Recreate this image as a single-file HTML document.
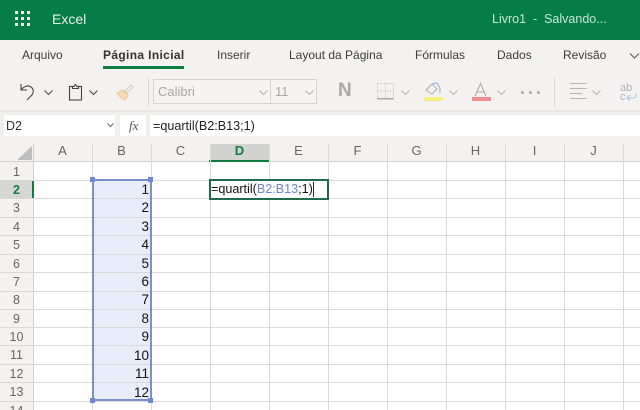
<!DOCTYPE html>
<html><head><meta charset="utf-8"><style>
html,body{margin:0;padding:0;width:640px;height:410px;overflow:hidden;background:#fff}
body{position:relative;font-family:"Liberation Sans",sans-serif;color:#333}
.a{position:absolute}
.t{position:absolute;white-space:nowrap;line-height:16px}
.tab{font-size:12px;color:#3c3c3c;top:47px}
.ch{position:absolute;top:143px;width:59px;text-align:center;font-size:13px;line-height:16px;color:#666}
.rh{position:absolute;left:0;width:33px;text-align:center;font-size:12.5px;line-height:18px;color:#666}
.v{position:absolute;left:92px;width:57px;text-align:right;font-size:13.5px;line-height:18px;color:#111}
.gv{position:absolute;top:144px;width:1px;height:266px;background:#d9d9d9}
.gh{position:absolute;left:33px;width:607px;height:1px;background:#d9d9d9}
.hh{position:absolute;left:0;width:33px;height:1px;background:#d9d9d9}
svg{position:absolute;overflow:visible}
</style></head><body>
<div class="a" style="left:0;top:0;width:640px;height:40px;background:#067d46"></div>
<svg style="left:15px;top:11px" width="15" height="15" fill="#e8f3ec"><rect x="0" y="0" width="3" height="3"/><rect x="6" y="0" width="3" height="3"/><rect x="12" y="0" width="3" height="3"/><rect x="0" y="6" width="3" height="3"/><rect x="6" y="6" width="3" height="3"/><rect x="12" y="6" width="3" height="3"/><rect x="0" y="12" width="3" height="3"/><rect x="6" y="12" width="3" height="3"/><rect x="12" y="12" width="3" height="3"/></svg>
<div class="t" style="left:52px;top:11px;font-size:14px;color:#e3f4ea;">Excel</div>
<div class="t" style="left:492px;top:11px;font-size:12.5px;color:#c5e8d3;">Livro1 &nbsp;- &nbsp;Salvando...</div>

<div class="a" style="left:0;top:40px;width:640px;height:72px;background:#f3f2f1"></div>
<div class="a" style="left:0;top:110px;width:640px;height:2px;background:#e6e5e4"></div>
<div class="t tab" style="left:22px">Arquivo</div>
<div class="t tab" style="left:103px;font-weight:bold;color:#333;letter-spacing:.35px">Página Inicial</div>
<div class="a" style="left:103px;top:66px;width:81px;height:3px;background:#107c41"></div>
<div class="t tab" style="left:217px">Inserir</div>
<div class="t tab" style="left:289px">Layout da Página</div>
<div class="t tab" style="left:415px">Fórmulas</div>
<div class="t tab" style="left:497px">Dados</div>
<div class="t tab" style="left:563px">Revisão</div>
<svg style="left:630px;top:53px" width="10" height="6" fill="none" stroke="#555"><path d="M0 .5l4.5 4.5 4.5-4.5"/></svg>

<svg style="left:20px;top:83px" width="18" height="18" fill="none" stroke="#444" stroke-width="1.1"><path d="M1 1v6h6"/><path d="M1 7c3-4 7-5 10-3 3 2 3 6 0 9l-4 4"/></svg>
<svg style="left:44px;top:90px" width="10" height="6" fill="none" stroke="#444"><path d="M.5.5l4 4 4-4"/></svg>
<svg style="left:69px;top:84px" width="14" height="17" fill="none" stroke="#444" stroke-width="1.1"><rect x=".5" y="2.5" width="12" height="13.5"/><path d="M3.5 4.5h6V2.5H8L6.5.5 5 2.5H3.5z" fill="#f3f2f1"/></svg>
<svg style="left:89px;top:90px" width="10" height="6" fill="none" stroke="#444"><path d="M.5.5l4 4 4-4"/></svg>
<svg style="left:116px;top:84px" width="18" height="16" fill="none" stroke-width="1.1"><path d="M1 9l6-3 5 5-3 5C6 15 3 12 1 9z" fill="#f8dcb8" stroke="#f0c590"/><path d="M9 7l6-6 2 2-6 6z" stroke="#ccc"/></svg>
<div class="a" style="left:148px;top:78px;width:1px;height:28px;background:#d8d7d6"></div>
<div class="a" style="left:153px;top:79px;width:164px;height:25px;border:1px solid #d4d3d2;box-sizing:border-box;background:#f5f4f3"></div>
<div class="a" style="left:270px;top:79px;width:1px;height:25px;background:#d4d3d2"></div>
<div class="t" style="left:158px;top:84px;font-size:13px;color:#a6a6a6">Calibri</div>
<div class="t" style="left:275px;top:84px;font-size:13px;color:#a6a6a6">11</div>
<svg style="left:259px;top:90px" width="10" height="6" fill="none" stroke="#b0b0b0"><path d="M.5.5l4 4 4-4"/></svg>
<svg style="left:305px;top:90px" width="10" height="6" fill="none" stroke="#b0b0b0"><path d="M.5.5l4 4 4-4"/></svg>
<div class="t" style="left:338px;top:83px;font-size:19px;font-weight:bold;color:#a9a9a9">N</div>
<svg style="left:377px;top:83px" width="17" height="17" fill="none" stroke="#cfcfcf"><path d="M.5.5h16v15H.5zM8.5.5v15M.5 8h16" stroke-dasharray="2 1"/><path d="M0 15.8h17" stroke="#aaa" stroke-width="1.5"/></svg>
<svg style="left:401px;top:90px" width="10" height="6" fill="none" stroke="#b0b0b0"><path d="M.5.5l4 4 4-4"/></svg>
<svg style="left:425px;top:83px" width="18" height="14" fill="none" stroke="#b0b0b0"><path d="M1 7l6-6 5 5-5 5z"/><path d="M7 1l5-1 3 5v5" stroke="#8fa9d0"/></svg>
<div class="a" style="left:424px;top:97px;width:19px;height:4px;background:#f6f07e"></div>
<svg style="left:449px;top:90px" width="10" height="6" fill="none" stroke="#b0b0b0"><path d="M.5.5l4 4 4-4"/></svg>
<svg style="left:474px;top:83px" width="14" height="14" fill="none" stroke="#a9a9a9"><path d="M1 13L6.5 .5 12 13M3 9h7"/></svg>
<div class="a" style="left:472px;top:97px;width:19px;height:4px;background:#ee8d90"></div>
<svg style="left:497px;top:90px" width="10" height="6" fill="none" stroke="#b0b0b0"><path d="M.5.5l4 4 4-4"/></svg>
<div class="a" style="left:521px;top:91px;width:3px;height:3px;background:#a9a9a9;box-shadow:8px 0 #a9a9a9,16px 0 #a9a9a9;border-radius:2px"></div>
<div class="a" style="left:554px;top:78px;width:1px;height:28px;background:#d8d7d6"></div>
<svg style="left:570px;top:83px" width="17" height="17" stroke="#b5b5b5"><path d="M0 .5h17M0 5.5h17M0 10.5h12M0 15.5h17" fill="none"/></svg>
<svg style="left:592px;top:90px" width="10" height="6" fill="none" stroke="#b0b0b0"><path d="M.5.5l4 4 4-4"/></svg>
<div class="t" style="left:620px;top:84px;font-size:11px;line-height:9px;color:#b0b0c0">ab<br>c</div>
<svg style="left:626px;top:93px" width="12" height="8" fill="none" stroke="#a8c4e6"><path d="M10 0v3q0 2-3 2H1M4 2L1 5l3 3"/></svg>

<div class="a" style="left:0;top:112px;width:640px;height:32px;background:#f0efee"></div>
<div class="a" style="left:4px;top:115px;width:111px;height:21px;background:#fff"></div>
<div class="t" style="left:6px;top:118px;font-size:12.5px;color:#333">D2</div>
<svg style="left:107px;top:123px" width="8" height="5" fill="none" stroke="#666"><path d="M.5.5l3 3 3-3"/></svg>
<div class="a" style="left:120px;top:115px;width:26px;height:21px;background:#fff"></div>
<div class="t" style="left:129px;top:118px;font:italic 13px 'Liberation Serif',serif;line-height:16px;color:#555">fx</div>
<div class="a" style="left:150px;top:115px;width:490px;height:21px;background:#fff"></div>
<div class="t" style="left:153px;top:118px;font-size:12.6px;color:#222">=quartil(B2:B13;1)</div>

<div class="a" style="left:0;top:137px;width:640px;height:25px;background:#f3f2f1"></div>
<div class="a" style="left:0;top:162px;width:33px;height:248px;background:#f3f2f1"></div>
<div class="a" style="left:0;top:161px;width:640px;height:1px;background:#cfcfcf"></div>
<div class="a" style="left:33px;top:144px;width:1px;height:266px;background:#cfcfcf"></div>
<svg style="left:17px;top:146px" width="15" height="14" fill="#bdbdbd"><path d="M15 0v14H0z"/></svg>
<div class="a" style="left:210px;top:144px;width:60px;height:17px;background:#d3d3d2"></div>
<div class="a" style="left:209px;top:160px;width:61px;height:2px;background:#107c41"></div>
<div class="a" style="left:0;top:180px;width:33px;height:18px;background:#d6d6d5"></div>
<div class="a" style="left:32px;top:180px;width:2px;height:19px;background:#107c41"></div>

<div class="ch" style="left:33px">A</div>
<div class="ch" style="left:92px">B</div>
<div class="ch" style="left:151px">C</div>
<div class="ch" style="left:210px;color:#107c41;font-weight:bold">D</div>
<div class="ch" style="left:269px">E</div>
<div class="ch" style="left:328px">F</div>
<div class="ch" style="left:387px">G</div>
<div class="ch" style="left:446px">H</div>
<div class="ch" style="left:505px">I</div>
<div class="ch" style="left:564px">J</div>

<div class="gv" style="left:92px"></div><div class="gv" style="left:151px"></div><div class="gv" style="left:210px"></div><div class="gv" style="left:269px"></div><div class="gv" style="left:328px"></div><div class="gv" style="left:387px"></div><div class="gv" style="left:446px"></div><div class="gv" style="left:505px"></div><div class="gv" style="left:564px"></div><div class="gv" style="left:623px"></div>

<div class="a" style="left:92px;top:180px;width:59px;height:221px;background:#e9edfa"></div>

<div class="gh" style="top:180px"></div><div class="gh" style="top:198px"></div><div class="gh" style="top:217px"></div><div class="gh" style="top:235px"></div><div class="gh" style="top:254px"></div><div class="gh" style="top:272px"></div><div class="gh" style="top:291px"></div><div class="gh" style="top:309px"></div><div class="gh" style="top:327px"></div><div class="gh" style="top:345px"></div><div class="gh" style="top:364px"></div><div class="gh" style="top:382px"></div><div class="gh" style="top:401px"></div>
<div class="hh" style="top:180px"></div><div class="hh" style="top:198px"></div><div class="hh" style="top:217px"></div><div class="hh" style="top:235px"></div><div class="hh" style="top:254px"></div><div class="hh" style="top:272px"></div><div class="hh" style="top:291px"></div><div class="hh" style="top:309px"></div><div class="hh" style="top:327px"></div><div class="hh" style="top:345px"></div><div class="hh" style="top:364px"></div><div class="hh" style="top:382px"></div><div class="hh" style="top:401px"></div>

<div class="rh" style="top:163px">1</div>
<div class="rh" style="top:181px;color:#107c41;font-weight:bold">2</div>
<div class="rh" style="top:199px">3</div>
<div class="rh" style="top:218px">4</div>
<div class="rh" style="top:236px">5</div>
<div class="rh" style="top:255px">6</div>
<div class="rh" style="top:273px">7</div>
<div class="rh" style="top:291px">8</div>
<div class="rh" style="top:310px">9</div>
<div class="rh" style="top:328px">10</div>
<div class="rh" style="top:346px">11</div>
<div class="rh" style="top:365px">12</div>
<div class="rh" style="top:383px">13</div>
<div class="rh" style="top:402px">14</div>

<div class="v" style="top:181px">1</div>
<div class="v" style="top:199px">2</div>
<div class="v" style="top:218px">3</div>
<div class="v" style="top:236px">4</div>
<div class="v" style="top:255px">5</div>
<div class="v" style="top:273px">6</div>
<div class="v" style="top:291px">7</div>
<div class="v" style="top:310px">8</div>
<div class="v" style="top:328px">9</div>
<div class="v" style="top:347px">10</div>
<div class="v" style="top:365px">11</div>
<div class="v" style="top:384px">12</div>

<div class="a" style="left:92px;top:179px;width:60px;height:222px;box-sizing:border-box;border:2px solid #7a90c8"></div>
<div class="a" style="left:90px;top:177px;width:5px;height:5px;background:#7088d2"></div>
<div class="a" style="left:148px;top:177px;width:5px;height:5px;background:#7088d2"></div>
<div class="a" style="left:90px;top:398px;width:5px;height:5px;background:#7088d2"></div>
<div class="a" style="left:148px;top:398px;width:5px;height:5px;background:#7088d2"></div>

<div class="a" style="left:209px;top:179px;width:120px;height:21px;box-sizing:border-box;border:2px solid #1f6b4b;background:#fff"></div>
<div class="t" style="left:211px;top:181px;font-size:12.6px;color:#111">=quartil(<span style="color:#6f86c9">B2:B13</span>;1)</div>
<div class="a" style="left:313px;top:182px;width:1px;height:15px;background:#222"></div>
</body></html>
